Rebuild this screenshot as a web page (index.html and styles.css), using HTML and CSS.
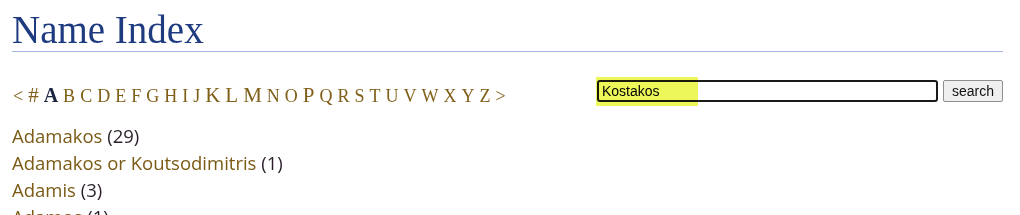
FILE: index.html
```html
<!DOCTYPE html>
<html lang="en">
<head>
  <meta charset="UTF-8">
  <title>Name Index</title>
  <link rel="stylesheet" href="styles.css">
</head>
<body>
  <div class="page">
    <h1 class="title">Name Index</h1>

    <div class="toolbar">
      <div class="letters">
        <a href="#">&lt;</a>
        <a href="#" class="big">#</a>
        <span class="current">A</span>
        <a href="#">B</a>
        <a href="#">C</a>
        <a href="#">D</a>
        <a href="#">E</a>
        <a href="#">F</a>
        <a href="#">G</a>
        <a href="#">H</a>
        <a href="#">I</a>
        <a href="#">J</a>
        <a href="#" class="big">K</a>
        <a href="#" class="big">L</a>
        <a href="#" class="big">M</a>
        <a href="#">N</a>
        <a href="#">O</a>
        <a href="#" class="big">P</a>
        <a href="#">Q</a>
        <a href="#">R</a>
        <a href="#">S</a>
        <a href="#">T</a>
        <a href="#">U</a>
        <a href="#">V</a>
        <a href="#">W</a>
        <a href="#">X</a>
        <a href="#">Y</a>
        <a href="#">Z</a>
        <a href="#">&gt;</a>
      </div>

      <form class="search">
        <input type="text" class="search-box" value="Kostakos">
        <button type="button" class="search-btn">search</button>
        <span class="marker"></span>
      </form>
    </div>

    <ul class="names">
      <li><a href="#">Adamakos</a> (29)</li>
      <li><a href="#">Adamakos or Koutsodimitris</a> (1)</li>
      <li><a href="#">Adamis</a> (3)</li>
      <li><a href="#">Adamos</a> (1)</li>
    </ul>
  </div>
</body>
</html>
```

FILE: styles.css
```css
body {
  margin: 0;
  background: #ffffff;
  overflow: hidden;
}

.page {
  padding: 0 17px 0 12px;
}

.title {
  margin: 0;
  padding-top: 9px;
  font-family: 'Liberation Serif', serif;
  font-weight: normal;
  font-size: 39px;
  line-height: 42px;
  color: #1f3b80;
  border-bottom: 1px solid #a3b4e0;
}

.toolbar {
  display: flex;
  justify-content: space-between;
  align-items: flex-start;
  margin-top: 27px;
}

.letters {
  display: flex;
  align-items: baseline;
  gap: 5px;
  padding: 4px 0 0 1px;
  font-family: 'Liberation Serif', serif;
  font-size: 18px;
}

.letters a {
  color: #806018;
  text-decoration: none;
}

.letters a.big {
  font-size: 21px;
}

.letters .current {
  color: #1a2540;
  font-weight: bold;
  font-size: 20px;
}

.search {
  position: relative;
  display: flex;
  gap: 5px;
  margin: 1px 0 0;
}

.search-box {
  width: 331px;
  height: 16px;
  padding: 1px 3px;
  border: 2px solid #1a1a1a;
  border-radius: 3px;
  font-family: 'Liberation Sans', Arial, sans-serif;
  font-size: 14px;
  outline: none;
  background: #ffffff;
}

.search-btn {
  height: 22px;
  padding: 0 8px;
  border: 1px solid #8f8f8f;
  border-radius: 2px;
  background: #efefef;
  font-family: 'Liberation Sans', Arial, sans-serif;
  font-size: 14px;
  color: #111111;
}

.marker {
  position: absolute;
  left: -1px;
  top: -3px;
  width: 102px;
  height: 29px;
  background: #eef75a;
  mix-blend-mode: multiply;
  pointer-events: none;
}

.names {
  list-style: none;
  margin: 14px 0 0;
  padding: 0;
  font-family: 'Open Sans', sans-serif;
  font-size: 18.5px;
  line-height: 27px;
  color: #2a1f2a;
}

.names a {
  color: #7a5a14;
  text-decoration: none;
}
```
